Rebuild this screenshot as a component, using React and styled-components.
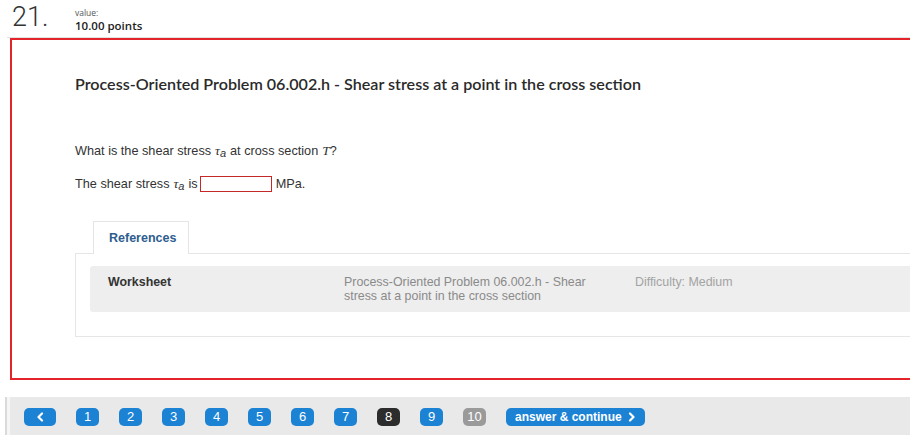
import React from 'react'
import styled, { createGlobalStyle } from 'styled-components'

const GlobalStyle = createGlobalStyle`
  body {
    margin: 0;
    background: #fff;
    overflow: hidden;
    font-family: "Liberation Sans", Arial, sans-serif;
    color: #333;
  }
`

const Page = styled.div`
  width: 1100px;
`

const Header = styled.header`
  display: flex;
  align-items: flex-start;
  height: 37px;
  margin-left: 7px;
  padding-left: 5px;
  border-bottom: 1px solid #e2e2e2;
`

const Number = styled.div`
  font-family: Roboto, sans-serif;
  font-weight: 300;
  font-size: 27px;
  line-height: 34px;
  color: #333;
  width: 63px;
`

const Value = styled.div`
  padding-top: 8px;
  span {
    display: block;
    font-family: "Open Sans", sans-serif;
    font-size: 8.5px;
    line-height: 10px;
    color: #555;
  }
  strong {
    display: block;
    font-family: "Open Sans", sans-serif;
    font-size: 11.5px;
    line-height: 16px;
    font-weight: 600;
    color: #222;
  }
`

const QuestionBox = styled.section`
  margin-left: 10px;
  border: 2px solid #e3242b;
  height: 338px;
  padding-left: 63px;
`

const Title = styled.h2`
  margin: 34px 0 0;
  font-family: Lato, sans-serif;
  font-weight: 600;
  font-size: 16.1px;
  line-height: 20px;
  color: #2a2a2a;
`

const Text = styled.p`
  margin: ${p => p.$top}px 0 0;
  font-size: 12.7px;
  line-height: 16px;
  color: #333;
  display: flex;
  align-items: center;
  i {
    font-family: "Liberation Serif", serif;
    font-size: 13.5px;
    margin-left: 4px;
  }
  i.sym {
    margin: 0 4px 0 4px;
  }
  sub {
    font-size: 11px;
    line-height: 0;
    position: relative;
    top: 2px;
    vertical-align: baseline;
    font-family: "Liberation Sans", Arial, sans-serif;
  }
`

const Blank = styled.span`
  display: inline-block;
  width: 70px;
  height: 14px;
  border: 1px solid #c62828;
  margin: 0 4px 0 2px;
`

const References = styled.div`
  margin-top: 28px;
  width: 900px;
`

const Tab = styled.div`
  margin-left: 18px;
  width: 96px;
  height: 33px;
  border: 1px solid #e5e5e5;
  border-bottom: none;
  background: #fff;
  position: relative;
  top: 1px;
  padding-left: 15px;
  box-sizing: border-box;
  display: flex;
  align-items: center;
  font-weight: bold;
  font-size: 12.5px;
  color: #2e5d8f;
`

const Panel = styled.div`
  border: 1px solid #e6e6e6;
  padding: 12px 0 24px 14px;
`

const Row = styled.div`
  display: grid;
  grid-template-columns: 236px 291px 1fr;
  background: #eeeeee;
  border-radius: 3px 0 0 3px;
  padding: 9px 0 9px 18px;
  font-size: 12.4px;
  line-height: 14px;
  min-height: 27px;
`

const Cell = styled.div`
  color: ${p => (p.$strong ? '#333' : p.$light ? '#a3a3a3' : '#8a8a8a')};
  font-weight: ${p => (p.$strong ? 'bold' : 'normal')};
  max-width: ${p => (p.$wrap ? '262px' : 'none')};
`

const NavBar = styled.nav`
  margin: 17px 0 0 5px;
  height: 38px;
  background: #e9e9e9;
  border-left: 2px solid #dadada;
  box-shadow: inset 3px 0 0 #f6f6f6;
  display: flex;
  align-items: center;
  padding-left: 17px;
  gap: 20px;
`

const PageButton = styled.button`
  border: none;
  height: 18px;
  margin-top: 1px;
  min-width: ${p => (p.$wide ? '32px' : '23px')};
  padding: 0 ${p => (p.$pad ? '9px' : '0')};
  border-radius: 5px;
  background: ${p => (p.$current ? '#2c2c2c' : p.$disabled ? '#9a9a9a' : '#1b82d4')};
  color: #fff;
  font-family: "Liberation Sans", Arial, sans-serif;
  font-size: ${p => (p.$pad ? '12px' : '13px')};
  font-weight: ${p => (p.$pad ? 'bold' : 'normal')};
  display: flex;
  align-items: center;
  justify-content: center;
  gap: 6px;
`

const Chevron = ({ left }) => (
  <svg width="8" height="10" viewBox="0 0 8 10">
    <path
      d={left ? 'M6 1.5 L2.5 5 L6 8.5' : 'M2 1.5 L5.5 5 L2 8.5'}
      fill="none"
      stroke="#fff"
      strokeWidth="2.2"
      strokeLinecap="round"
      strokeLinejoin="round"
    />
  </svg>
)

const pages = [1, 2, 3, 4, 5, 6, 7, 8, 9, 10]

export default function App() {
  return (
    <Page>
      <GlobalStyle />
      <Header>
        <Number>21.</Number>
        <Value>
          <span>value:</span>
          <strong>10.00 points</strong>
        </Value>
      </Header>

      <QuestionBox>
        <Title>Process-Oriented Problem 06.002.h - Shear stress at a point in the cross section</Title>
        <Text $top={49}>
          What is the shear stress<i className="sym">τ<sub>a</sub></i>at cross section<i>T</i>?
        </Text>
        <Text $top={17}>
          The shear stress<i className="sym">τ<sub>a</sub></i>is<Blank />MPa.
        </Text>

        <References>
          <Tab>References</Tab>
          <Panel>
            <Row>
              <Cell $strong>Worksheet</Cell>
              <Cell $wrap>Process-Oriented Problem 06.002.h - Shear stress at a point in the cross section</Cell>
              <Cell $light>Difficulty: Medium</Cell>
            </Row>
          </Panel>
        </References>
      </QuestionBox>

      <NavBar>
        <PageButton $wide><Chevron left /></PageButton>
        {pages.map(n => (
          <PageButton key={n} $current={n === 8} $disabled={n === 10}>{n}</PageButton>
        ))}
        <PageButton $pad>answer &amp; continue <Chevron /></PageButton>
      </NavBar>
    </Page>
  )
}
